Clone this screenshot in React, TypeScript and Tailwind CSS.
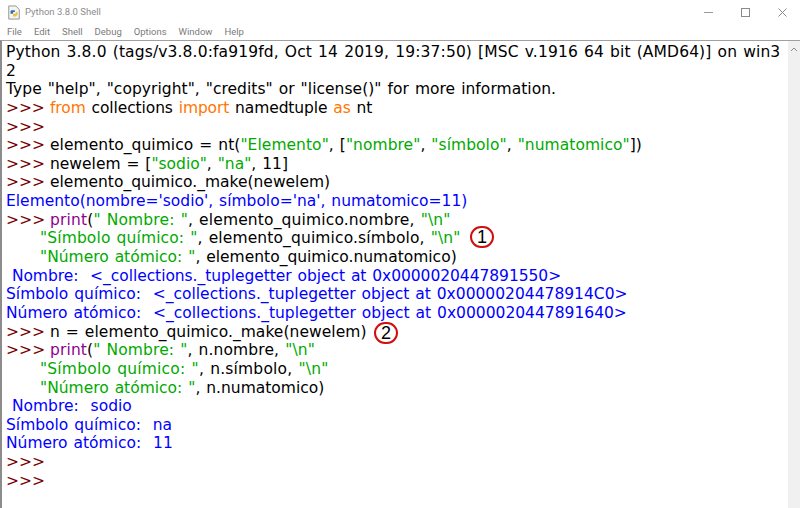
import React from "react";

type Tok = { t: string; c?: string };

const P = "text-[#770000] inline-block w-[44px]";
const I = "inline-block w-[34px]";
const K = "text-[#ff7700]";
const S = "text-[#00aa00]";
const B = "text-[#900090]";
const O = "text-[#0000ff]";

const prompt: Tok = { t: ">>> ", c: P };
const indent: Tok = { t: "    ", c: I };

const lines: Tok[][] = [
	[{ t: "Python 3.8.0 (tags/v3.8.0:fa919fd, Oct 14 2019, 19:37:50) [MSC v.1916 64 bit (AMD64)] on win3" }],
	[{ t: "2" }],
	[{ t: 'Type "help", "copyright", "credits" or "license()" for more information.' }],
	[prompt, { t: "from", c: K }, { t: " collections " }, { t: "import", c: K }, { t: " namedtuple " }, { t: "as", c: K }, { t: " nt" }],
	[prompt],
	[prompt, { t: "elemento_quimico = nt(" }, { t: '"Elemento"', c: S }, { t: ", [" }, { t: '"nombre"', c: S }, { t: ", " }, { t: '"símbolo"', c: S }, { t: ", " }, { t: '"numatomico"', c: S }, { t: "])" }],
	[prompt, { t: "newelem = [" }, { t: '"sodio"', c: S }, { t: ", " }, { t: '"na"', c: S }, { t: ", 11]" }],
	[prompt, { t: "elemento_quimico._make(newelem)" }],
	[{ t: "Elemento(nombre='sodio', símbolo='na', numatomico=11)", c: O }],
	[prompt, { t: "print", c: B }, { t: "(" }, { t: '" Nombre: "', c: S }, { t: ", elemento_quimico.nombre, " }, { t: '"\\n"', c: S }],
	[indent, { t: '"Símbolo químico: "', c: S }, { t: ", elemento_quimico.símbolo, " }, { t: '"\\n"', c: S }],
	[indent, { t: '"Número atómico: "', c: S }, { t: ", elemento_quimico.numatomico)" }],
	[{ t: " Nombre:  <_collections._tuplegetter object at 0x0000020447891550>", c: O }],
	[{ t: "Símbolo químico:  <_collections._tuplegetter object at 0x00000204478914C0>", c: O }],
	[{ t: "Número atómico:  <_collections._tuplegetter object at 0x0000020447891640>", c: O }],
	[prompt, { t: "n = elemento_quimico._make(newelem)" }],
	[prompt, { t: "print", c: B }, { t: "(" }, { t: '" Nombre: "', c: S }, { t: ", n.nombre, " }, { t: '"\\n"', c: S }],
	[indent, { t: '"Símbolo químico: "', c: S }, { t: ", n.símbolo, " }, { t: '"\\n"', c: S }],
	[indent, { t: '"Número atómico: "', c: S }, { t: ", n.numatomico)" }],
	[{ t: " Nombre:  sodio", c: O }],
	[{ t: "Símbolo químico:  na", c: O }],
	[{ t: "Número atómico:  11", c: O }],
	[prompt],
	[prompt],
];

// small per-line nudges so the line ends land where they do in the shot
const nudge: Record<number, string> = {
	0: "tracking-[0.13px]",
	2: "tracking-[0.04px]",
	3: "tracking-[-0.1px]",
	5: "tracking-[0.05px]",
	9: "tracking-[0.15px]",
	10: "tracking-[0.13px]",
	12: "tracking-[-0.05px]",
	15: "tracking-[0.05px]",
	16: "tracking-[0.12px]",
	17: "tracking-[0.2px]",
};

const Mark = ({ n, className }: { n: string; className: string }) => (
	<div className={`absolute w-[24px] h-[22px] rounded-full border-2 border-[#d01010] bg-white flex items-center justify-center text-[18px] leading-none text-black font-['Liberation_Sans',sans-serif] ${className}`}>
		{n}
	</div>
);

const PyIcon = () => (
	<svg width="14" height="15" viewBox="0 0 16 17">
		<path d="M2 1h8l4 4v11H2z" fill="#f4f4f4" stroke="#8a8a8a" />
		<path d="M5 6h4v2H7v2H4V7z" fill="#3a6ea5" />
		<path d="M10 8h2v3l-2 2H7v-3h3z" fill="#e8c33a" />
	</svg>
);

export default function App() {
	return (
		<div className="w-[800px] h-[508px] bg-white overflow-hidden flex flex-col font-['DejaVu_Sans',sans-serif]">
			<div className="h-[24px] flex items-center shrink-0 pl-[7px] font-['Roboto',sans-serif]">
				<PyIcon />
				<span className="ml-[4px] text-[9.5px] text-[#8c8c8c]">Python 3.8.0 Shell</span>
				<div className="ml-auto flex items-center gap-[28px] pr-[13px]">
					<div className="w-[9px] h-px bg-[#9a9a9a]" />
					<div className="w-[9px] h-[9px] border border-[#8a8a8a]" />
					<svg width="9" height="9" viewBox="0 0 9 9" stroke="#8a8a8a" fill="none">
						<path d="M0.5 0.5l8 8M8.5 0.5l-8 8" />
					</svg>
				</div>
			</div>
			<div className="h-[16px] flex items-center gap-[12px] pl-[7px] pt-[1px] shrink-0 text-[9.5px] text-[#7a7a7a] font-['Roboto',sans-serif]">
				<span>File</span>
				<span>Edit</span>
				<span>Shell</span>
				<span>Debug</span>
				<span>Options</span>
				<span>Window</span>
				<span>Help</span>
			</div>
			<div className="flex-1 flex border-t border-t-[#a0a0a0] border-l-[2px] border-l-[#8c8c8c] min-h-0">
				<div className="relative flex-1 pl-[4px] pt-[2px] text-[15.5px] leading-[18.65px] [word-spacing:1px] text-black whitespace-pre overflow-hidden">
					{lines.map((toks, i) => (
						<div key={i} className={`h-[18.65px] ${nudge[i] ?? ""}`}>
							{toks.map((tk, j) => (
								<span key={j} className={tk.c}>
									{tk.t}
								</span>
							))}
						</div>
					))}
					<Mark n="1" className="left-[468px] top-[185px]" />
					<Mark n="2" className="left-[372px] top-[281px]" />
				</div>
				<div className="w-[12px] shrink-0 bg-[#f0f0f0] flex justify-center pt-[6px]">
					<svg width="8" height="5" viewBox="0 0 8 5" fill="none" stroke="#8a8a8a">
						<path d="M1 4l3-3 3 3" />
					</svg>
				</div>
			</div>
		</div>
	);
}
